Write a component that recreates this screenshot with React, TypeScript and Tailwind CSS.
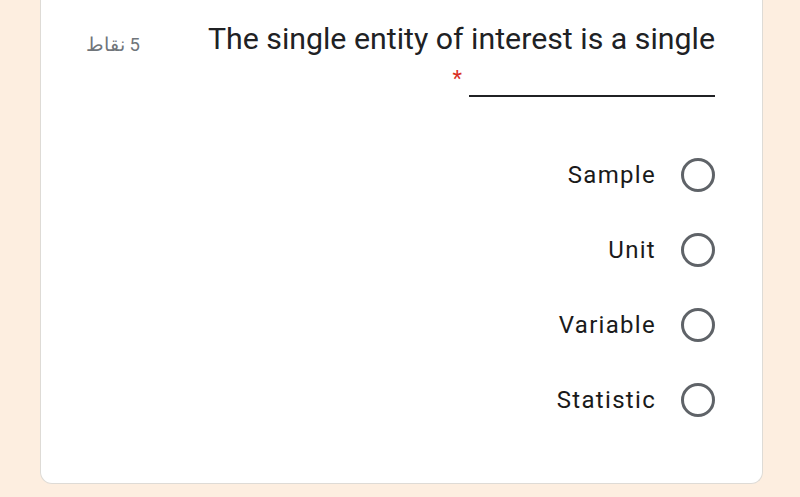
const options = ['Sample', 'Unit', 'Variable', 'Statistic'];

export default function App() {
  return (
    <div className="w-[800px] h-[497px] bg-[#fdeee0] pl-[40px] pr-[37px] pb-[13px] overflow-hidden" style={{ fontFamily: 'Roboto, "Noto Sans", sans-serif' }}>
      <div className="h-full bg-white border-x border-b border-[#dedbd6] rounded-b-[12px] pr-[47px] pl-[45px]">
        <div className="flex justify-between items-start pt-[20px]">
          <div className="pt-[12px] text-[18.5px] text-[#70757a]" dir="rtl">
            5 نقاط
          </div>
          <div className="flex flex-col items-end">
            <div className="text-[30.3px] leading-[38px] text-[#202124]">The single entity of interest is a single</div>
            <div className="flex items-start mt-[10px]">
              <span className="text-[#d93025] text-[22px] leading-[22px] mr-[7px]">*</span>
              <div className="w-[246px] h-[2px] bg-[#202124] mt-[27px]"></div>
            </div>
          </div>
        </div>
        <div className="flex flex-col items-end mt-[61px] gap-[41px]">
          {options.map((o) => (
            <div key={o} className="flex items-center gap-[25px]">
              <span className="text-[24px] tracking-[1.3px] text-[#1a1a1a] leading-[34px]">{o}</span>
              <div className="w-[34px] h-[34px] rounded-full border-[3px] border-[#5f6368]"></div>
            </div>
          ))}
        </div>
      </div>
    </div>
  );
}
